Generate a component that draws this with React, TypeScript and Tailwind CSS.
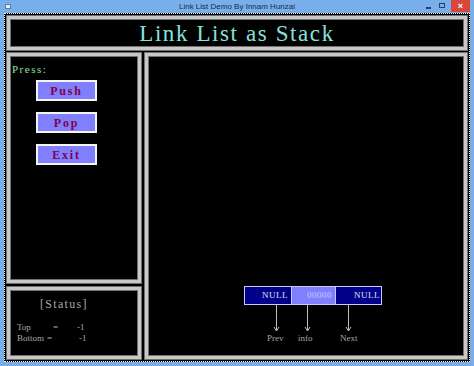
import React from "react";

const serif = { fontFamily: '"Liberation Serif", "Times New Roman", serif' };
const panel = "border-[3px] border-[#c8c8c8] shadow-[inset_0_0_0_1px_#707070,0_0_0_1px_#707070] bg-black";

function MenuButton({ label }: { label: string }) {
  return (
    <div className="flex h-[21px] w-[61px] items-center justify-center border-2 border-[#f4f4f4] bg-[#8080ff] text-[12px] font-bold tracking-[1.8px] text-[#80004a]">
      {label}
    </div>
  );
}

function Arrow() {
  return (
    <svg width="7" height="27" viewBox="0 0 7 27" className="block">
      <line x1="3.5" y1="0" x2="3.5" y2="25" stroke="#bdbdbd" strokeWidth="1" />
      <path d="M1 22 L3.5 26 L6 22" fill="none" stroke="#bdbdbd" strokeWidth="1" />
    </svg>
  );
}

export default function App() {
  return (
    <div className="flex h-[366px] w-[474px] flex-col bg-[#78aee9]" style={serif}>
      {/* window title bar */}
      <div className="relative flex h-[13px] items-center justify-center">
        <div className="absolute left-[5px] top-[4px] h-[5px] w-[6px] border border-[#5a7fae] bg-[#e8eef6]" />
        <span
          className="text-[8px] text-[#1c2c48]"
          style={{ fontFamily: '"Liberation Sans", Arial, sans-serif' }}
        >
          Link List Demo By Innam Hunzai
        </span>
        <div className="absolute right-[4px] top-0 flex h-[12px] items-start">
          <div className="mt-[7px] mr-[8px] h-[2px] w-[5px] bg-[#2a3f60]" />
          <div className="mt-[3px] mr-[6px] h-[5px] w-[6px] border border-[#2a3f60]" />
          <div className="flex h-[12px] w-[19px] items-center justify-center bg-[#d9473a] text-[9px] font-bold leading-none text-white"
            style={{ fontFamily: '"Liberation Sans", Arial, sans-serif' }}>
            ×
          </div>
        </div>
      </div>

      {/* client area */}
      <div className="mx-[4px] mb-[4px] flex flex-1 flex-col gap-[3px] border border-dotted border-white bg-black p-[2px]">
        <div className={`${panel} flex h-[34px] items-center justify-center`}>
          <span className="text-[23px] leading-none tracking-[1.6px] text-[#86e3dc]">Link List as Stack</span>
        </div>

        <div className="flex flex-1 gap-[4px]">
          <div className="flex w-[134px] flex-col gap-[4px]">
            <div className={`${panel} flex-1 pl-[2px] pt-[8px]`}>
              <div className="text-[11px] leading-none tracking-[1.5px] text-[#8fe39a]">Press:</div>
              <div className="mt-[5px] flex flex-col gap-[11px] pl-[24px]">
                <MenuButton label="Push" />
                <MenuButton label="Pop" />
                <MenuButton label="Exit" />
              </div>
            </div>
            <div className={`${panel} h-[72px] text-[#a8a8a8]`}>
              <div className="mt-[8px] pl-[30px] text-[12px] leading-none tracking-[1.3px]">[Status]</div>
              <div className="mt-[12px] flex pl-[7px] text-[9px] leading-[11px]">
                <div className="flex flex-col">
                  <span>Top</span>
                  <span>Bottom</span>
                </div>
                <div className="ml-[3px] flex flex-col">
                  <span className="pl-[6px]">=</span>
                  <span>=</span>
                </div>
                <div className="ml-[19px] flex flex-col">
                  <span>-1</span>
                  <span className="pl-[2px]">-1</span>
                </div>
              </div>
            </div>
          </div>

          <div className={`${panel} flex flex-1 flex-col justify-end pb-[11px] pl-[96px]`}>
            <div className="flex h-[19px] w-[138px] border border-[#c8c8ff] text-[9px] leading-none tracking-[0.5px]">
              <div className="flex w-[46px] items-center justify-end bg-[#00008a] pr-[3px] text-[#e0e0f0]">NULL</div>
              <div className="flex w-[45px] items-center justify-end border-x border-[#c8c8ff] bg-[#8080ff] pr-[3px] text-[#c4ccff]">00000</div>
              <div className="flex flex-1 items-center justify-end bg-[#00008a] pr-[1px] text-[#e0e0f0]">NULL</div>
            </div>
            <div className="relative h-[28px] w-[138px]">
              <div className="absolute left-[29px] top-0"><Arrow /></div>
              <div className="absolute left-[60px] top-0"><Arrow /></div>
              <div className="absolute left-[101px] top-0"><Arrow /></div>
            </div>
            <div className="relative h-[12px] w-[138px] text-[9px] leading-none text-[#a8a8a8]">
              <span className="absolute left-[23px] top-[1px]">Prev</span>
              <span className="absolute left-[54px] top-[1px]">info</span>
              <span className="absolute left-[96px] top-[1px]">Next</span>
            </div>
          </div>
        </div>
      </div>
    </div>
  );
}
